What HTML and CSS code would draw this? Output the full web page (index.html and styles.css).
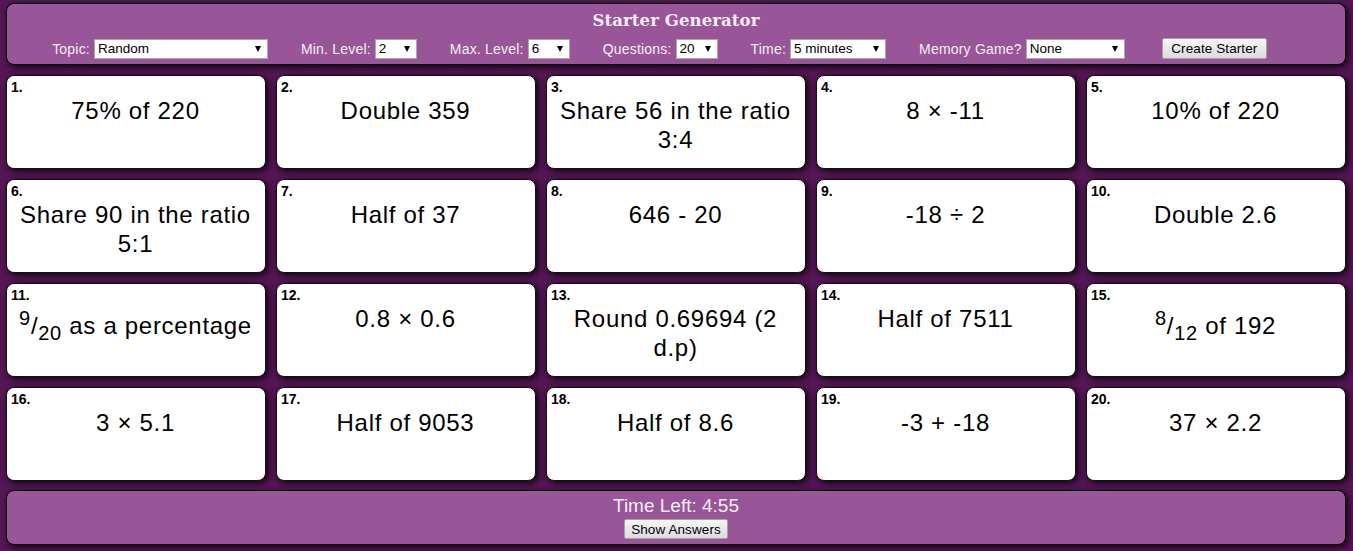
FILE: index.html
```html
<!DOCTYPE html>
<html>
<head>
<meta charset="utf-8">
<title>Starter Generator</title>
<link rel="stylesheet" href="styles.css">
</head>
<body>
<div class="page">
  <header class="panel top">
    <h1 class="title">Starter Generator</h1>
    <div class="controls">
      <label class="ctl">Topic: <span class="sel w-topic"><select><option>Random</option></select></span></label>
      <label class="ctl">Min. Level: <span class="sel w-num"><select><option>2</option></select></span></label>
      <label class="ctl">Max. Level: <span class="sel w-num"><select><option>6</option></select></span></label>
      <label class="ctl">Questions: <span class="sel w-num"><select><option>20</option></select></span></label>
      <label class="ctl">Time: <span class="sel w-time"><select><option>5 minutes</option></select></span></label>
      <label class="ctl">Memory Game? <span class="sel w-mem"><select><option>None</option></select></span></label>
      <button class="btn create">Create Starter</button>
    </div>
  </header>

  <main class="grid">
    <div class="card"><div class="num">1.</div><div class="q">75% of 220</div></div>
    <div class="card"><div class="num">2.</div><div class="q">Double 359</div></div>
    <div class="card"><div class="num">3.</div><div class="q">Share 56 in the ratio 3:4</div></div>
    <div class="card"><div class="num">4.</div><div class="q">8 × -11</div></div>
    <div class="card"><div class="num">5.</div><div class="q">10% of 220</div></div>
    <div class="card"><div class="num">6.</div><div class="q">Share 90 in the ratio 5:1</div></div>
    <div class="card"><div class="num">7.</div><div class="q">Half of 37</div></div>
    <div class="card"><div class="num">8.</div><div class="q">646 - 20</div></div>
    <div class="card"><div class="num">9.</div><div class="q">-18 ÷ 2</div></div>
    <div class="card"><div class="num">10.</div><div class="q">Double 2.6</div></div>
    <div class="card"><div class="num">11.</div><div class="q"><sup>9</sup>/<sub>20</sub> as a percentage</div></div>
    <div class="card"><div class="num">12.</div><div class="q">0.8 × 0.6</div></div>
    <div class="card"><div class="num">13.</div><div class="q">Round 0.69694 (2 d.p)</div></div>
    <div class="card"><div class="num">14.</div><div class="q">Half of 7511</div></div>
    <div class="card"><div class="num">15.</div><div class="q"><sup>8</sup>/<sub>12</sub> of 192</div></div>
    <div class="card"><div class="num">16.</div><div class="q">3 × 5.1</div></div>
    <div class="card"><div class="num">17.</div><div class="q">Half of 9053</div></div>
    <div class="card"><div class="num">18.</div><div class="q">Half of 8.6</div></div>
    <div class="card"><div class="num">19.</div><div class="q">-3 + -18</div></div>
    <div class="card"><div class="num">20.</div><div class="q">37 × 2.2</div></div>
  </main>

  <footer class="panel bottom">
    <div class="timer">Time Left: 4:55</div>
    <button class="btn">Show Answers</button>
  </footer>
</div>
</body>
</html>
```

FILE: styles.css
```css
* { box-sizing: border-box; }

html, body {
  margin: 0;
  padding: 0;
  background: #541654;
  font-family: "Liberation Sans", Arial, sans-serif;
}

.page {
  padding: 3px 7px 6px 6px;
  height: 551px;
}

.panel {
  background: #985597;
  border: 1px solid #000;
  border-radius: 8px;
  box-shadow: 2px 2px 6px rgba(0, 0, 0, 0.85);
  color: #f6eef6;
  text-align: center;
}

.top {
  height: 62px;
  padding-top: 7px;
  margin-bottom: 10px;
}

.title {
  margin: 0;
  font-family: "DejaVu Serif", serif;
  font-weight: bold;
  font-size: 16.5px;
  line-height: 20px;
  letter-spacing: 0.1px;
  color: #f6eef6;
}

.controls {
  margin-top: 7px;
  height: 21px;
  display: flex;
  justify-content: center;
  align-items: center;
  font-size: 14px;
  letter-spacing: 0.2px;
}

.ctl {
  display: inline-flex;
  align-items: center;
  gap: 4px;
  margin-right: 33px;
  white-space: nowrap;
}

.sel {
  position: relative;
  display: inline-block;
  height: 20px;
  letter-spacing: 0;
}

.sel select {
  -webkit-appearance: none;
  appearance: none;
  width: 100%;
  height: 20px;
  margin: 0;
  padding: 0 0 0 3px;
  border: 1px solid #a9a9a9;
  border-radius: 0;
  background: #fff;
  color: #000;
  font-family: "Liberation Sans", Arial, sans-serif;
  font-size: 13.5px;
  outline: none;
}

.sel::after {
  content: "";
  position: absolute;
  right: 7px;
  top: 7px;
  border-left: 3.5px solid transparent;
  border-right: 3.5px solid transparent;
  border-top: 6px solid #000;
  pointer-events: none;
}

.w-topic { width: 174px; }
.w-num { width: 42px; }
.w-time { width: 96px; }
.w-mem { width: 99px; }

.btn {
  height: 21px;
  padding: 0 7px;
  margin: 0;
  border: 1px solid #a3a3a3;
  border-radius: 2px;
  background: linear-gradient(#f6f6f6, #dcdcdc);
  color: #000;
  font-family: "Liberation Sans", Arial, sans-serif;
  font-size: 13.5px;
  letter-spacing: 0.1px;
}

.create {
  width: 105px;
  margin-left: 4px;
  margin-right: 33px;
}

.grid {
  display: grid;
  grid-template-columns: repeat(5, 1fr);
  grid-auto-rows: 94px;
  gap: 10px;
  margin-bottom: 9px;
}

.card {
  background: #fff;
  border: 1px solid #111;
  border-radius: 8px;
  box-shadow: 2px 2px 6px rgba(0, 0, 0, 0.85);
  padding: 3px 5px 3px 4px;
  color: #000;
  text-align: center;
}

.num {
  text-align: left;
  font-weight: bold;
  font-size: 14px;
  line-height: 16px;
}

.q {
  margin-top: 1px;
  font-size: 24px;
  line-height: 29px;
  letter-spacing: 0.7px;
}

.bottom {
  height: 55px;
  padding-top: 4px;
}

.timer {
  font-size: 19px;
  line-height: 22px;
}

.bottom .btn {
  margin-top: 2px;
  height: 20px;
  width: 104px;
  padding: 0;
}
```
